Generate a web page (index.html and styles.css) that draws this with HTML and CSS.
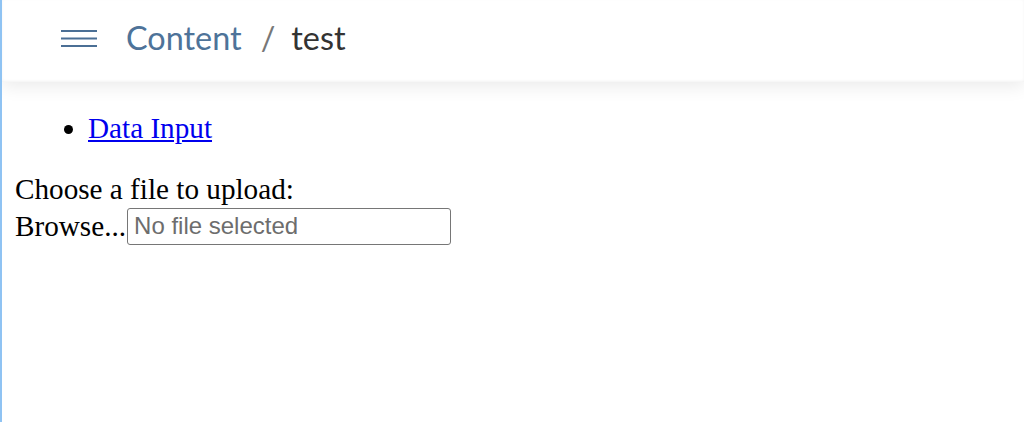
FILE: index.html
```html
<!DOCTYPE html>
<html>
<head>
<meta charset="utf-8">
<link rel="stylesheet" href="styles.css">
</head>
<body>
<header class="topbar">
  <span class="menu-icon" aria-label="menu">
    <svg width="36" height="20" viewBox="0 0 36 20"><path d="M0 2h36M0 9.5h36M0 17h36" stroke="#4b6f95" stroke-width="2" fill="none"/></svg>
  </span>
  <nav class="crumbs">
    <span class="crumb-link">Content</span>
    <span class="crumb-sep">/</span>
    <span class="crumb-current">test</span>
  </nav>
</header>
<main class="content">
  <ul class="links">
    <li><a href="#">Data Input</a></li>
  </ul>
  <div class="upload">
    <div class="upload-label">Choose a file to upload:</div>
    <div class="upload-row"><span class="browse">Browse...</span><span class="file-box">No file selected</span></div>
  </div>
</main>
</body>
</html>
```
FILE: styles.css
```css
html, body {
  margin: 0;
  padding: 0;
  background: #fff;
}
body {
  border-left: 2px solid #8fc3f3;
  min-height: 422px;
  box-sizing: border-box;
  font-family: "Liberation Serif", serif;
  font-size: 29.2px;
  color: #000;
  overflow: hidden;
}
.topbar {
  height: 82px;
  display: flex;
  align-items: center;
  padding-left: 59px;
  background: #fff;
  box-shadow: 0 5px 16px rgba(0,0,0,0.08), 0 -1px 3px rgba(0,0,0,0.05) inset;
  position: relative;
}
.menu-icon {
  display: flex;
  width: 36px;
  height: 20px;
  margin-top: -4px;
}
.crumbs {
  margin-left: 29px;
  font-family: Lato, sans-serif;
  font-size: 32.4px;
  display: flex;
  align-items: baseline;
  margin-top: -8px;
}
.crumb-link { color: #4e7399; }
.crumb-sep { color: #777; margin: 0 16px 0 19px; }
.crumb-current { color: #333; }
.content {
  padding-left: 13px;
}
.links {
  margin: 30px 0 29px;
  padding-left: 73px;
  line-height: 32px;
}
.links a { color: #0000ee; }
.upload { line-height: 32px; }
.upload-row {
  display: flex;
  align-items: flex-end;
  height: 40px;
}
.browse { line-height: 32px; margin-bottom: 3px; margin-right: 1px; }
.file-box {
  box-sizing: border-box;
  width: 324px;
  height: 37px;
  border: 1.5px solid #767676;
  border-radius: 3px;
  font-family: "Liberation Sans", Arial, sans-serif;
  font-size: 24px;
  color: #6d6d6d;
  padding: 1px 6px 0 6px;
  line-height: 32px;
}
```
